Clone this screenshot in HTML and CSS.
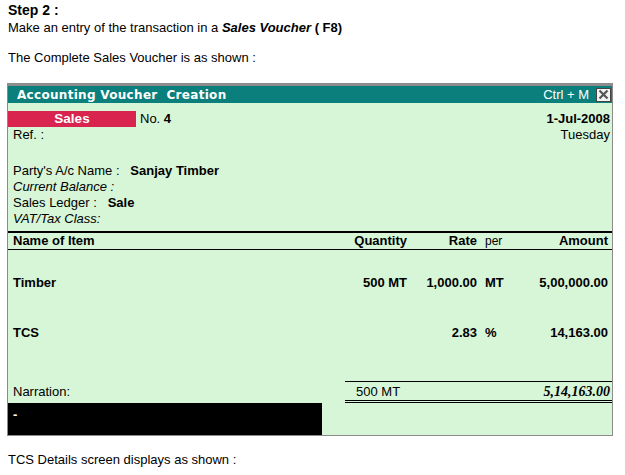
FILE: index.html
```html
<!DOCTYPE html>
<html lang="en">
<head>
    <meta charset="UTF-8">
    <title>Sales Voucher - Step 2</title>
    <link rel="stylesheet" href="styles.css">
</head>
<body>

<p class="step">Step 2 :</p>
<p class="line">Make an entry of the transaction in a <b><i>Sales Voucher</i></b> <b>( F8)</b></p>
<p class="line gap">The Complete Sales Voucher is as shown :</p>

<div class="voucher">
    <div class="title-bar">
        <span class="title">Accounting Voucher&nbsp; Creation</span>
        <span class="shortcut">Ctrl + M</span>
        <span class="close-btn">
            <svg width="11" height="11" viewBox="0 0 11 11">
                <path d="M1.5 1.5 L9.5 9.5 M9.5 1.5 L1.5 9.5" stroke="#555" stroke-width="2.2" />
            </svg>
        </span>
    </div>

    <div class="head-row sales-row">
        <div class="left">
            <span class="vtype">Sales</span>
            <span class="vno">No. <b>4</b></span>
        </div>
        <b>1-Jul-2008</b>
    </div>
    <div class="head-row">
        <span>Ref. :</span>
        <span>Tuesday</span>
    </div>

    <div class="party">
        <div>Party's A/c Name : &nbsp;&nbsp;<b>Sanjay Timber</b></div>
        <div><i>Current Balance :</i></div>
        <div>Sales Ledger : &nbsp;&nbsp;<b>Sale</b></div>
        <div><i>VAT/Tax Class:</i></div>
    </div>

    <div class="items-head">
        <span class="c-name">Name of Item</span>
        <span class="c-qty">Quantity</span>
        <span class="c-rate">Rate</span>
        <span class="c-per">per</span>
        <span class="c-amt">Amount</span>
    </div>

    <div class="item-row first">
        <span class="c-name">Timber</span>
        <span class="c-qty">500 MT</span>
        <span class="c-rate">1,000.00</span>
        <span class="c-per">MT</span>
        <span class="c-amt">5,00,000.00</span>
    </div>
    <div class="item-row">
        <span class="c-name">TCS</span>
        <span class="c-qty"></span>
        <span class="c-rate">2.83</span>
        <span class="c-per">%</span>
        <span class="c-amt">14,163.00</span>
    </div>

    <div class="totals">
        <span class="narration">Narration:</span>
        <div class="total-box">
            <span class="t-qty">500 MT</span>
            <span class="t-amt">5,14,163.00</span>
        </div>
    </div>

    <div class="bottom">
        <div class="narration-box">-</div>
    </div>
</div>

<p class="line after">TCS Details screen displays as shown :</p>

</body>
</html>
```

FILE: styles.css
```css
body {
    margin: 0;
    padding: 2px 8px;
    font-family: "Liberation Sans", Arial, sans-serif;
    font-size: 13px;
    color: #000;
    background-color: #fff;
}

p {
    margin: 0;
}

.step {
    font-weight: bold;
    font-size: 14px;
    line-height: 16px;
}

.line {
    line-height: 16px;
    margin-top: 2px;
}

.line.gap {
    margin-top: 14px;
}

.voucher {
    width: 604px;
    margin-top: 17px;
    margin-left: -1px;
    border: 1px solid #8c8c8c;
    border-top: 3px solid #8c8c8c;
    background-color: #d7f5d7;
}

.title-bar {
    display: flex;
    align-items: center;
    height: 17px;
    background-color: #0a7f7b;
    color: #fff;
    padding-left: 9px;
}

.title {
    flex: 1;
    font-family: "DejaVu Sans", Verdana, sans-serif;
    font-weight: bold;
    font-size: 12px;
    letter-spacing: 0.3px;
}

.shortcut {
    font-size: 13px;
    margin-right: 7px;
}

.close-btn {
    display: flex;
    align-items: center;
    justify-content: center;
    width: 13px;
    height: 12px;
    background-color: #f4f4f4;
    border: 1px solid #444;
    margin-right: 1px;
}

.head-row {
    display: flex;
    justify-content: space-between;
    line-height: 16px;
    padding: 0 2px 0 5px;
}

.head-row.sales-row {
    margin-top: 8px;
    padding-left: 0;
}

.left {
    display: flex;
}

.vtype {
    width: 128px;
    text-align: center;
    background-color: #d8244f;
    color: #fff;
    font-weight: bold;
    font-size: 13.5px;
    margin-right: 4px;
}

.party {
    margin-top: 20px;
    padding-left: 5px;
    line-height: 16px;
}

.items-head,
.item-row {
    display: grid;
    grid-template-columns: 337px 62px 70px 36px 97px;
    line-height: 16px;
}

.items-head {
    margin-top: 4px;
    border-top: 2px solid #000;
    border-bottom: 1px solid #000;
    font-weight: bold;
}

.item-row {
    font-weight: bold;
    margin-top: 34px;
}

.item-row.first {
    margin-top: 25px;
}

.c-name {
    padding-left: 5px;
}

.c-qty,
.c-rate,
.c-amt {
    text-align: right;
}

.c-per {
    padding-left: 8px;
}

.items-head .c-per {
    font-weight: normal;
    font-size: 12px;
}

.c-amt {
    padding-right: 2px;
}

.totals {
    display: flex;
    justify-content: space-between;
    align-items: center;
    margin-top: 40px;
}

.narration {
    padding-left: 5px;
    line-height: 16px;
}

.total-box {
    display: flex;
    justify-content: space-between;
    width: 267px;
    border-top: 1px solid #000;
    border-bottom: 3px double #000;
    line-height: 17px;
    padding: 1px 2px 0 11px;
    box-sizing: border-box;
}

.t-amt {
    font-family: "Liberation Serif", "Times New Roman", serif;
    font-weight: bold;
    font-style: italic;
    font-size: 14px;
}

.bottom {
    height: 32px;
}

.narration-box {
    width: 314px;
    height: 32px;
    background-color: #000;
    color: #fff;
    font-weight: bold;
    padding: 4px 5px;
    box-sizing: border-box;
}

.line.after {
    margin-top: 16px;
}
```
